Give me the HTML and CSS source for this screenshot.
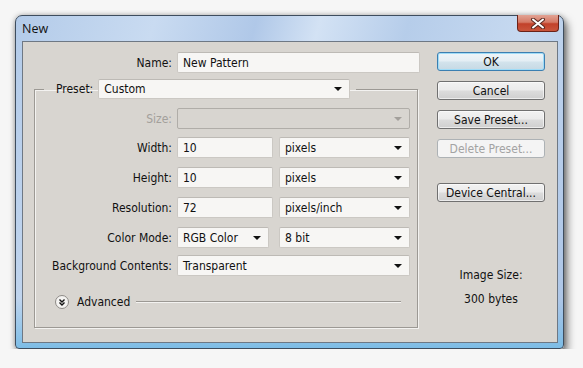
FILE: index.html
```html
<!DOCTYPE html>
<html lang="en">

<head>
  <meta charset="UTF-8">
  <title>New</title>
  <link rel="stylesheet" href="styles.css">
</head>

<body>
  <div class="window">
    <div class="titlebar">
      <span class="title">New</span>
      <div class="close-btn">
        <svg width="16" height="11" viewBox="0 0 16 11">
          <path d="M3 1.5 L13 9.5 M13 1.5 L3 9.5" stroke="#5a2a22" stroke-width="4" stroke-linecap="round" />
          <path d="M3 1.5 L13 9.5 M13 1.5 L3 9.5" stroke="#fff" stroke-width="2" stroke-linecap="round" />
        </svg>
      </div>
    </div>

    <div class="client">
      <div class="form-col">
        <div class="name-row">
          <label class="lbl">Name:</label>
          <input class="field" type="text" value="New Pattern">
        </div>

        <fieldset class="group">
          <legend class="group-legend">
            <span class="lbl">Preset:</span>
            <div class="combo preset-combo"><span>Custom</span><i class="arrow"></i></div>
          </legend>

          <div class="row size-row">
            <span class="lbl disabled">Size:</span>
            <div class="combo combo-disabled full"><span></span><i class="arrow"></i></div>
          </div>
          <div class="row">
            <span class="lbl">Width:</span>
            <input class="field num" type="text" value="10">
            <div class="combo unit"><span>pixels</span><i class="arrow"></i></div>
          </div>
          <div class="row">
            <span class="lbl">Height:</span>
            <input class="field num" type="text" value="10">
            <div class="combo unit"><span>pixels</span><i class="arrow"></i></div>
          </div>
          <div class="row">
            <span class="lbl">Resolution:</span>
            <input class="field num" type="text" value="72">
            <div class="combo unit"><span>pixels/inch</span><i class="arrow"></i></div>
          </div>
          <div class="row mode-row">
            <span class="lbl">Color Mode:</span>
            <div class="combo mode"><span>RGB Color</span><i class="arrow"></i></div>
            <div class="combo unit"><span>8 bit</span><i class="arrow"></i></div>
          </div>
          <div class="row">
            <span class="lbl">Background Contents:</span>
            <div class="combo full"><span>Transparent</span><i class="arrow"></i></div>
          </div>

          <div class="advanced">
            <span class="adv-icon">
              <svg width="14" height="14" viewBox="0 0 14 14">
                <circle cx="7" cy="7" r="6.5" fill="#f4f3f1" stroke="#8d8a86" />
                <path d="M4.5 4.5 L7 7 L9.5 4.5 M4.5 7.5 L7 10 L9.5 7.5" fill="none" stroke="#111" stroke-width="1.4" />
              </svg>
            </span>
            <span class="adv-text">Advanced</span>
            <span class="adv-line"></span>
          </div>
        </fieldset>
      </div>

      <div class="btn-col">
        <button class="btn default">OK</button>
        <button class="btn">Cancel</button>
        <button class="btn">Save Preset...</button>
        <button class="btn" disabled>Delete Preset...</button>
        <button class="btn device">Device Central...</button>
        <div class="img-size">
          <div>Image Size:</div>
          <div>300 bytes</div>
        </div>
      </div>
    </div>
  </div>
</body>

</html>
```

FILE: styles.css
```css
body {
  margin: 0;
  background: #f6f6f6;
  font-family: "DejaVu Sans Condensed", "DejaVu Sans", sans-serif;
  font-size: 12px;
  color: #111;
}

.window {
  box-sizing: border-box;
  width: 549px;
  height: 334px;
  margin: 15px 0 0 15px;
  padding: 0 5px 5px 6px;
  border: 1px solid #3e4d5e;
  border-radius: 7px 7px 4px 4px;
  background:
    linear-gradient(180deg, rgba(255, 255, 255, 0) 85%, #7dbde6 100%),
    linear-gradient(105deg, #b3cbe9 0%, #c9dbf1 22%, #b0c8e8 38%, #d3e2f4 48%, #b6cdea 62%, #c6d9f0 80%, #abc4e6 100%);
  box-shadow: 3px 5px 8px rgba(0, 0, 0, 0.55), 0 0 5px rgba(0, 0, 0, 0.25);
}

.titlebar {
  display: flex;
  justify-content: space-between;
  align-items: center;
  height: 25px;
}

.title {
  font-family: "Open Sans", sans-serif;
  font-size: 12.5px;
  color: #111;
}

.close-btn {
  align-self: flex-start;
  margin-top: -1px;
  margin-right: -1px;
  width: 42px;
  height: 17px;
  box-sizing: border-box;
  border: 1px solid #6b2218;
  border-top: none;
  border-radius: 0 0 4px 4px;
  background: linear-gradient(180deg, #e2a394 0%, #d57a66 45%, #c2412a 55%, #c9553c 100%);
  display: flex;
  align-items: center;
  justify-content: center;
}

.client {
  box-sizing: border-box;
  height: 302px;
  border: 1px solid #6e7884;
  background: #d8d5d0;
  display: flex;
  gap: 17px;
  padding: 10px 0 0 11px;
}

.form-col {
  width: 386px;
}

.lbl {
  text-align: right;
  white-space: nowrap;
}

.lbl.disabled {
  color: #a3a09b;
}

.name-row {
  display: grid;
  grid-template-columns: 138px 243px;
  column-gap: 5px;
  align-items: center;
}

.field {
  box-sizing: border-box;
  height: 21px;
  margin: 0;
  padding: 0 5px;
  border: 1px solid #cbc8c3;
  border-top-color: #bdbab5;
  border-radius: 2px;
  background: #f7f6f4;
  font-family: inherit;
  font-size: 12px;
  color: #111;
  outline: none;
}

.group {
  box-sizing: border-box;
  width: 384px;
  height: 249px;
  margin: 6px 0 0 0;
  padding: 9px 0 0 0;
  border: 1px solid #9c9994;
  box-shadow: inset 1px 1px 0 #f3f2f0, 1px 1px 0 #f3f2f0;
}

.group-legend {
  display: flex;
  align-items: center;
  gap: 5px;
  margin-left: 9px;
  padding: 0 6px 0 12px;
}

.combo {
  box-sizing: border-box;
  height: 21px;
  display: flex;
  align-items: center;
  justify-content: space-between;
  padding: 0 5px 0 5px;
  border: 1px solid #cbc8c3;
  border-top-color: #bdbab5;
  border-radius: 2px;
  background: #f7f6f4;
  white-space: nowrap;
}

.arrow {
  width: 0;
  height: 0;
  border-left: 4px solid transparent;
  border-right: 4px solid transparent;
  border-top: 4px solid #111;
  margin-right: 2px;
}

.preset-combo {
  width: 252px;
  height: 20px;
}

.combo-disabled {
  background: #d8d5d0;
  border-color: #b0ada8;
}

.combo-disabled .arrow {
  border-top-color: #a3a09b;
}

.row {
  display: flex;
  align-items: center;
  height: 21px;
  margin-bottom: 9px;
}

.size-row {
  margin-bottom: 8px;
}

.mode-row {
  margin-bottom: 7px;
}

.row .lbl {
  width: 137px;
  margin-right: 5px;
}

.full {
  width: 233px;
}

.num {
  width: 96px;
  margin-right: 6px;
}

.unit {
  width: 131px;
}

.mode {
  width: 92px;
  margin-right: 10px;
}

.advanced {
  display: flex;
  align-items: center;
  height: 16px;
  margin: 18px 16px 0 20px;
}

.adv-icon {
  display: flex;
  width: 14px;
  height: 14px;
}

.adv-text {
  margin-left: 8px;
}

.adv-line {
  flex: 1;
  height: 0;
  margin-left: 6px;
  border-top: 1px solid #9c9994;
  border-bottom: 1px solid #f3f2f0;
}

.btn-col {
  width: 108px;
  display: flex;
  flex-direction: column;
  gap: 10px;
}

.btn {
  box-sizing: border-box;
  height: 19px;
  margin: 0;
  padding: 0;
  border: 1px solid #707070;
  border-radius: 3px;
  background: linear-gradient(180deg, #f2f2f2 0%, #ebebeb 48%, #dcdcdc 52%, #cfcfcf 100%);
  box-shadow: inset 0 0 0 1px rgba(255, 255, 255, 0.6);
  font-family: inherit;
  font-size: 12px;
  color: #111;
}

.btn.default {
  border-color: #3c7fb1;
  box-shadow: inset 0 0 0 1px #9fdcf7;
  background: linear-gradient(180deg, #eef5f9 0%, #e4eef4 48%, #d3e3ec 52%, #c6d9e4 100%);
}

.btn:disabled {
  color: #a3a3a3;
  border-color: #adb2b5;
  background: #f4f4f4;
  box-shadow: none;
}

.btn.device {
  margin-top: 15px;
}

.img-size {
  margin-top: 55px;
  display: flex;
  flex-direction: column;
  align-items: center;
  gap: 8px;
  line-height: 16px;
}
```
